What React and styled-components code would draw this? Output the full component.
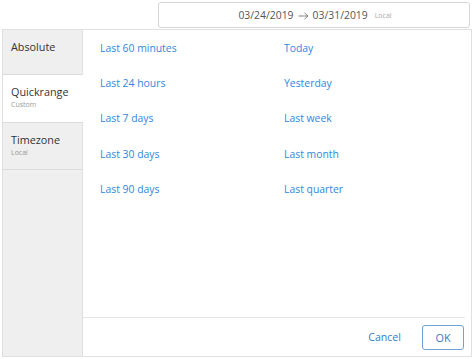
import styled, { createGlobalStyle } from "styled-components";

const GlobalStyle = createGlobalStyle`
  body {
    margin: 0;
    padding: 0;
    background: #fff;
    font-family: "Open Sans", "Noto Sans", Arial, sans-serif;
  }
`;

const Page = styled.div`
  width: 474px;
  height: 359px;
  padding: 2px 2px 0 2px;
  box-sizing: border-box;
  display: flex;
  flex-direction: column;
`;

const TopBar = styled.div`
  display: flex;
  justify-content: flex-end;
  padding-right: 2px;
`;

const RangeInput = styled.div`
  width: 312px;
  height: 26px;
  box-sizing: border-box;
  border: 1px solid #d6d6d6;
  border-radius: 3px;
  display: flex;
  align-items: center;
  justify-content: center;
  gap: 4px;
  padding-left: 2px;
  font-size: 10.4px;
  color: #555;
`;

const Arrow = styled.svg`
  width: 11px;
  height: 8px;
  margin-top: 1px;
`;

const Zone = styled.span`
  font-size: 7px;
  color: #aaa;
  margin-left: 3px;
`;

const Panel = styled.div`
  margin-top: 1px;
  height: 328px;
  box-sizing: border-box;
  border: 1px solid #e0e0e0;
  display: flex;
`;

const Sidebar = styled.div`
  width: 79px;
  background: #efefef;
  border-right: 1px solid #e0e0e0;
  display: flex;
  flex-direction: column;
`;

const Tab = styled.div`
  height: ${(p) => p.h}px;
  box-sizing: border-box;
  padding: 9px 0 0 8px;
  border-bottom: 1px solid #dcdcdc;
  background: ${(p) => (p.active ? "#fff" : "transparent")};
  margin-right: ${(p) => (p.active ? "-1px" : "0")};
`;

const TabTitle = styled.div`
  font-size: 10.8px;
  color: #333;
  line-height: 15px;
`;

const TabSub = styled.div`
  font-size: 7px;
  color: #999;
  line-height: 11px;
`;

const Content = styled.div`
  flex: 1;
  display: flex;
  flex-direction: column;
`;

const Grid = styled.div`
  flex: 1;
  display: grid;
  grid-template-columns: 184px 1fr;
  grid-auto-rows: 35.2px;
  padding: 5px 0 0 17px;
`;

const Link = styled.a`
  font-size: 10.4px;
  color: #2f87e0;
  text-decoration: none;
  line-height: 15px;
`;

const Footer = styled.div`
  height: 38px;
  border-top: 1px solid #e6e6e6;
  margin-right: 6px;
  display: flex;
  align-items: center;
  justify-content: flex-end;
  gap: 21px;
  padding-right: 1px;
`;

const CancelButton = styled.button`
  background: none;
  border: none;
  padding: 0;
  font-family: inherit;
  font-size: 10.6px;
  color: #2f80cc;
`;

const OkButton = styled.button`
  width: 42px;
  height: 25px;
  background: #fff;
  border: 1px solid #6ea3d6;
  border-radius: 3px;
  font-family: inherit;
  font-size: 10.8px;
  color: #2f80cc;
`;

const left = ["Last 60 minutes", "Last 24 hours", "Last 7 days", "Last 30 days", "Last 90 days"];
const right = ["Today", "Yesterday", "Last week", "Last month", "Last quarter"];

export default function App() {
  return (
    <Page>
      <GlobalStyle />
      <TopBar>
        <RangeInput>
          <span>03/24/2019</span>
          <Arrow viewBox="0 0 11 8">
            <path d="M0.5 4H10M6.5 0.8L10 4L6.5 7.2" fill="none" stroke="#777" strokeWidth="0.9" />
          </Arrow>
          <span>03/31/2019</span>
          <Zone>Local</Zone>
        </RangeInput>
      </TopBar>
      <Panel>
        <Sidebar>
          <Tab h={45}>
            <TabTitle>Absolute</TabTitle>
          </Tab>
          <Tab h={48} active>
            <TabTitle>Quickrange</TabTitle>
            <TabSub>Custom</TabSub>
          </Tab>
          <Tab h={47}>
            <TabTitle>Timezone</TabTitle>
            <TabSub>Local</TabSub>
          </Tab>
        </Sidebar>
        <Content>
          <Grid>
            {left.map((l, i) => [
              <div key={l}><Link href="#">{l}</Link></div>,
              <div key={right[i]}><Link href="#">{right[i]}</Link></div>,
            ])}
          </Grid>
          <Footer>
            <CancelButton>Cancel</CancelButton>
            <OkButton>OK</OkButton>
          </Footer>
        </Content>
      </Panel>
    </Page>
  );
}
